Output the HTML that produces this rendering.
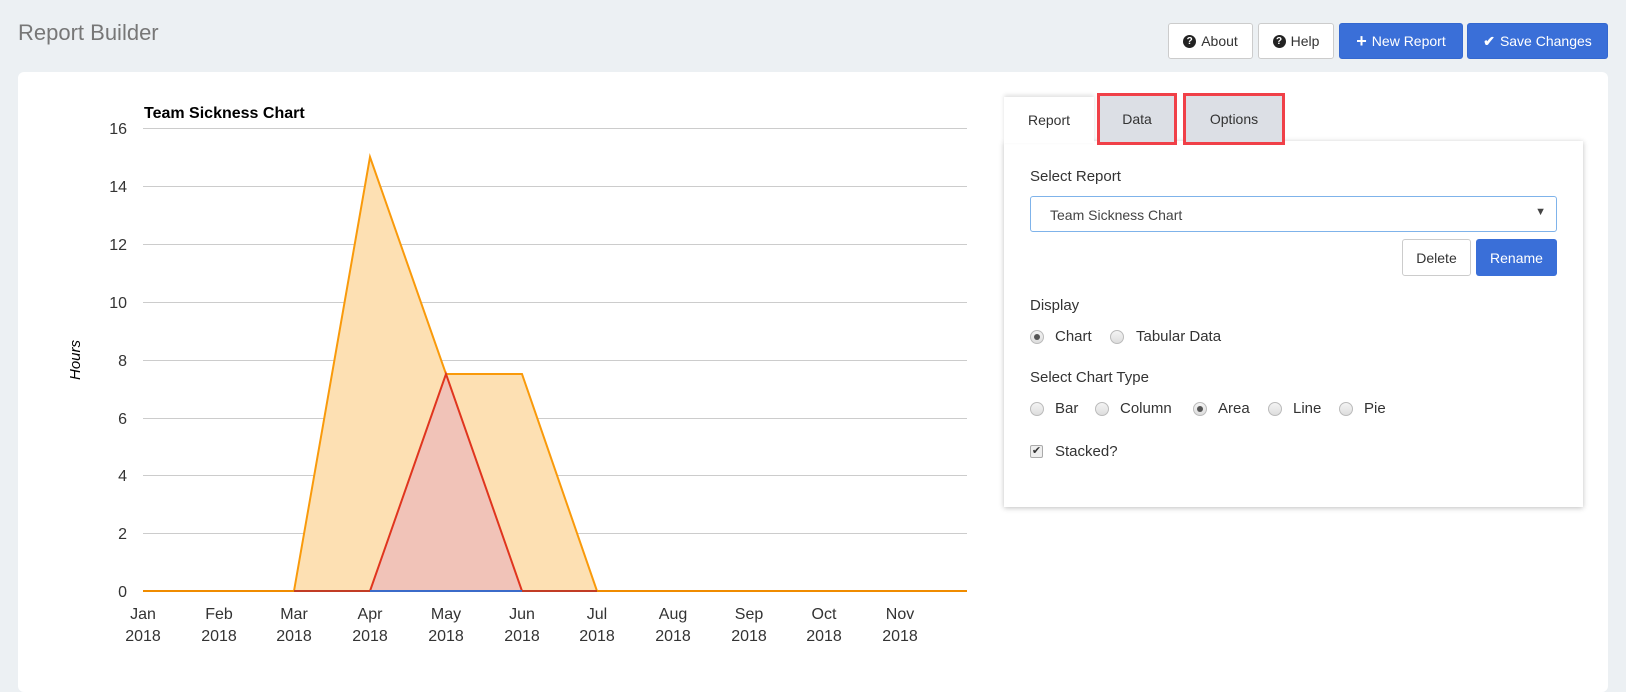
<!DOCTYPE html>
<html><head><meta charset="utf-8"><style>
*{box-sizing:border-box;margin:0;padding:0}
body{width:1626px;height:676px;background:#ecf0f3;font-family:"Liberation Sans",sans-serif;position:relative;overflow:hidden;color:#333}
.abs{position:absolute}
.btn{position:absolute;top:23px;height:36px;border-radius:3px;font-size:14px;display:flex;align-items:center;justify-content:center;gap:5px}
.wb{background:#fff;border:1px solid #ccc;color:#333}
.bb{background:#3a6fd8;color:#fff;border:1px solid #3468d0}
.ico{width:13px;height:13px;border-radius:50%;background:#222;color:#fff;font-size:10px;font-weight:bold;display:inline-flex;align-items:center;justify-content:center}
.card{left:18px;top:72px;width:1590px;height:620px;background:#fff;border-radius:6px}
.tab{position:absolute;font-size:14px;display:flex;align-items:center;justify-content:center}
.panel{left:1004px;top:141px;width:579px;height:366px;background:#fff;box-shadow:0 1px 5px rgba(0,0,0,.25)}
.lbl{position:absolute;font-size:15px;color:#333}
.radio{position:absolute;width:14px;height:14px;border-radius:50%;border:1px solid #bbb;background:linear-gradient(#f4f4f4,#ddd)}
.radio.on::after{content:"";position:absolute;left:3px;top:3px;width:6px;height:6px;border-radius:50%;background:#555}
</style></head><body>
<div class="abs" style="left:18px;top:20px;font-size:22px;color:#777">Report Builder</div>
<div class="btn wb" style="left:1168px;width:85px"><span class="ico">?</span>About</div>
<div class="btn wb" style="left:1258px;width:76px"><span class="ico">?</span>Help</div>
<div class="btn bb" style="left:1339px;width:124px"><b style="font-size:18px">+</b>New Report</div>
<div class="btn bb" style="left:1467px;width:141px"><b>✔</b>Save Changes</div>
<div class="abs card"></div>

<svg class="abs" style="left:0;top:0" width="1000" height="676">
<text x="144" y="118" font-size="16" font-weight="bold" font-family="Liberation Sans">Team Sickness Chart</text>
<g stroke="#ccc" stroke-width="1">
<line x1="143" x2="967" y1="128.5" y2="128.5"/><line x1="143" x2="967" y1="186.5" y2="186.5"/><line x1="143" x2="967" y1="244.5" y2="244.5"/><line x1="143" x2="967" y1="302.5" y2="302.5"/><line x1="143" x2="967" y1="360.5" y2="360.5"/><line x1="143" x2="967" y1="418.5" y2="418.5"/><line x1="143" x2="967" y1="475.5" y2="475.5"/><line x1="143" x2="967" y1="533.5" y2="533.5"/></g>
<g font-size="16" font-family="Liberation Sans" fill="#333" text-anchor="end">
<text x="127" y="134">16</text><text x="127" y="192">14</text><text x="127" y="250">12</text><text x="127" y="308">10</text><text x="127" y="366">8</text><text x="127" y="424">6</text><text x="127" y="481">4</text><text x="127" y="539">2</text><text x="127" y="597">0</text></g>
<text transform="translate(80,360) rotate(-90)" font-size="15" font-style="italic" text-anchor="middle" font-family="Liberation Sans">Hours</text>
<polygon points="294,591 370,157 446,374 522,374 597,591" fill="#fde0b3" stroke="#f99a0b" stroke-width="2"/>
<polygon points="370,591 446,374 522,591" fill="#f1c3b8" stroke="#e0351e" stroke-width="2"/>
<line x1="143" x2="967" y1="591" y2="591" stroke="#f08c00" stroke-width="2"/>
<line x1="294" x2="597" y1="591" y2="591" stroke="#c23c25" stroke-width="2"/>
<line x1="370" x2="522" y1="591" y2="591" stroke="#3b6bc9" stroke-width="2"/>
<g font-size="16" font-family="Liberation Sans" fill="#333" text-anchor="middle">
<text x="143" y="619">Jan</text><text x="143" y="641">2018</text>
<text x="219" y="619">Feb</text><text x="219" y="641">2018</text>
<text x="294" y="619">Mar</text><text x="294" y="641">2018</text>
<text x="370" y="619">Apr</text><text x="370" y="641">2018</text>
<text x="446" y="619">May</text><text x="446" y="641">2018</text>
<text x="522" y="619">Jun</text><text x="522" y="641">2018</text>
<text x="597" y="619">Jul</text><text x="597" y="641">2018</text>
<text x="673" y="619">Aug</text><text x="673" y="641">2018</text>
<text x="749" y="619">Sep</text><text x="749" y="641">2018</text>
<text x="824" y="619">Oct</text><text x="824" y="641">2018</text>
<text x="900" y="619">Nov</text><text x="900" y="641">2018</text></g>
</svg>

<div class="abs panel"></div>
<div class="tab" style="left:1004px;top:97px;width:90px;height:46px;background:#fff;box-shadow:0 -2px 4px rgba(0,0,0,.12)">Report</div>
<div class="tab" style="left:1097px;top:93px;width:80px;height:52px;background:#dcdfe5;border:3px solid #f04048">Data</div>
<div class="tab" style="left:1183px;top:93px;width:102px;height:52px;background:#dcdfe5;border:3px solid #f04048">Options</div>

<div class="lbl" style="left:1030px;top:168px">Select Report</div>
<div class="abs" style="left:1030px;top:196px;width:527px;height:36px;border:1px solid #7fb3ea;border-radius:3px;font-size:14px;padding:10px 19px;color:#444">Team Sickness Chart<span style="position:absolute;right:10px;top:9px;font-size:11px">▼</span></div>
<div class="abs" style="left:1402px;top:239px;width:69px;height:37px;border:1px solid #ccc;border-radius:3px;font-size:14px;display:flex;align-items:center;justify-content:center">Delete</div>
<div class="abs" style="left:1476px;top:239px;width:81px;height:37px;background:#3a6fd8;border-radius:3px;color:#fff;font-size:14px;display:flex;align-items:center;justify-content:center">Rename</div>

<div class="lbl" style="left:1030px;top:297px">Display</div>
<div class="radio on" style="left:1030px;top:330px"></div><div class="lbl" style="left:1055px;top:328px">Chart</div>
<div class="radio" style="left:1110px;top:330px"></div><div class="lbl" style="left:1136px;top:328px">Tabular Data</div>
<div class="lbl" style="left:1030px;top:369px">Select Chart Type</div>
<div class="radio" style="left:1030px;top:402px"></div><div class="lbl" style="left:1055px;top:400px">Bar</div>
<div class="radio" style="left:1095px;top:402px"></div><div class="lbl" style="left:1120px;top:400px">Column</div>
<div class="radio on" style="left:1193px;top:402px"></div><div class="lbl" style="left:1218px;top:400px">Area</div>
<div class="radio" style="left:1268px;top:402px"></div><div class="lbl" style="left:1293px;top:400px">Line</div>
<div class="radio" style="left:1339px;top:402px"></div><div class="lbl" style="left:1364px;top:400px">Pie</div>
<div class="abs" style="left:1030px;top:445px;width:13px;height:13px;border:1px solid #aaa;border-radius:2px;background:#eee;font-size:11px;line-height:11px;text-align:center">✔</div>
<div class="lbl" style="left:1055px;top:443px">Stacked?</div>
</body></html>
